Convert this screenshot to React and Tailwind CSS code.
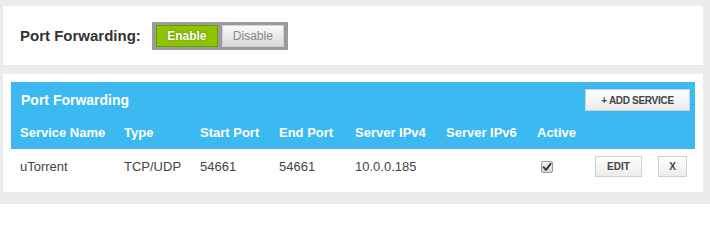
import React from "react";

const cols = [
  { label: "Service Name", w: "w-[104px]" },
  { label: "Type", w: "w-[76px]" },
  { label: "Start Port", w: "w-[79px]" },
  { label: "End Port", w: "w-[76px]" },
  { label: "Server IPv4", w: "w-[91px]" },
  { label: "Server IPv6", w: "w-[91px]" },
  { label: "Active", w: "w-[58px]" },
];

function Check() {
  return (
    <div className="ml-[4px] flex h-[12px] w-[12px] items-center justify-center rounded-[2px] border border-[#9a9a9a] bg-gradient-to-b from-[#f4f4f4] to-[#d6d6d6]">
      <svg width="10" height="10" viewBox="0 0 10 10">
        <path d="M1.5 5.2 L4 7.8 L8.6 1.8" fill="none" stroke="#333" strokeWidth="1.9" strokeLinecap="round" strokeLinejoin="round" />
      </svg>
    </div>
  );
}

export default function App() {
  return (
    <div
      className="h-[204px] w-[710px] bg-[#ececec] pt-[6px]"
      style={{ fontFamily: "'Liberation Sans', Arial, sans-serif" }}
    >
      <div className="ml-[3px] flex h-[59px] w-[700px] items-center bg-white pl-[17px]">
        <span className="text-[15px] font-bold leading-[18px] text-[#333]">Port Forwarding:</span>
        <div className="ml-[11px] flex gap-[4px] bg-[#9b9b9b] px-[4px] py-[3px]">
          <button className="flex h-[22px] w-[62px] items-center justify-center border border-[#6d9c00] bg-[#8cc400] text-[12px] font-bold text-white [text-shadow:0_0_2px_rgba(60,90,0,0.6)]">
            Enable
          </button>
          <button className="flex h-[22px] w-[62px] items-center justify-center border border-[#cfcfcf] bg-gradient-to-b from-[#fafafa] to-[#d9d9d9] text-[12px] text-[#8a8a8a]">
            Disable
          </button>
        </div>
      </div>

      <div className="ml-[3px] mt-[9px] w-[700px] bg-white p-[8px]">
        <div className="bg-[#3bb9f0] pt-[7px]">
          <div className="flex h-[22px] items-center justify-between pl-[10px] pr-[5px]">
            <span className="text-[14px] font-bold leading-[16px] text-white">Port Forwarding</span>
            <button className="flex h-[22px] w-[105px] items-center justify-center border border-[#d0d0d0] bg-gradient-to-b from-white to-[#ececec] text-[10px] font-bold tracking-[-0.3px] text-[#444]">
              + ADD SERVICE
            </button>
          </div>
          <div className="flex pl-[9px] pt-[14px] pb-[8px]">
            {cols.map((c) => (
              <div key={c.label} className={`${c.w} shrink-0 text-[13px] font-bold leading-[16px] text-white`}>
                {c.label}
              </div>
            ))}
          </div>
        </div>
        <div className="flex h-[35px] items-center pl-[9px] text-[13px] leading-[16px] text-[#444]">
          <div className="w-[104px] shrink-0">uTorrent</div>
          <div className="w-[76px] shrink-0">TCP/UDP</div>
          <div className="w-[79px] shrink-0">54661</div>
          <div className="w-[76px] shrink-0">54661</div>
          <div className="w-[91px] shrink-0">10.0.0.185</div>
          <div className="w-[91px] shrink-0"></div>
          <div className="flex w-[58px] shrink-0 items-center">
            <Check />
          </div>
          <div className="w-[63px] shrink-0">
            <button className="flex h-[21px] w-[47px] items-center justify-center border border-[#d0d0d0] bg-gradient-to-b from-white to-[#ececec] text-[10px] font-bold text-[#444]">
              EDIT
            </button>
          </div>
          <div className="shrink-0">
            <button className="flex h-[21px] w-[29px] items-center justify-center border border-[#d0d0d0] bg-gradient-to-b from-white to-[#ececec] text-[10px] font-bold text-[#444]">
              X
            </button>
          </div>
        </div>
      </div>
    </div>
  );
}
